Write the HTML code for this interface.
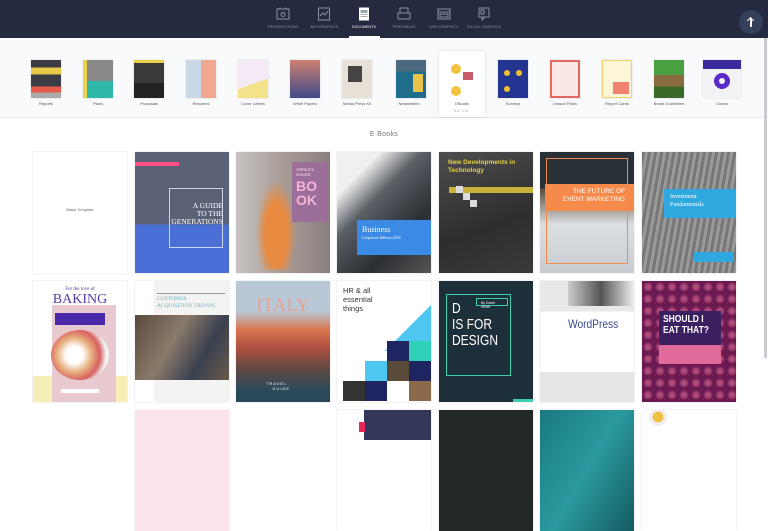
<!DOCTYPE html>
<html><head><meta charset="utf-8">
<style>
*{margin:0;padding:0;box-sizing:border-box}
body{width:768px;height:432px;overflow:hidden;background:#fff;font-family:"Liberation Sans",sans-serif;position:relative}
.nav{position:absolute;left:0;top:0;width:768px;height:38px;background:#262a41}
.ni{position:absolute;top:7px;width:60px;text-align:center;color:#8a8ea6;font-size:3.6px;letter-spacing:.1px}
.ni svg{display:block;margin:0 auto 4px}
.ni.act{color:#fff}
.ul{position:absolute;left:349px;top:36px;width:31px;height:2px;background:#fff}
.up{position:absolute;left:739px;top:10px;width:24px;height:24px;border-radius:50%;background:#34405a}
.up:after{content:"";position:absolute;left:11px;top:8px;width:1.5px;height:9px;background:#fff}
.up:before{content:"";position:absolute;left:9px;top:8px;width:4px;height:4px;border-left:1.5px solid #fff;border-top:1.5px solid #fff;transform:rotate(45deg)}
.strip{position:absolute;left:0;top:38px;width:768px;height:80px;background:#f9fafc;border-bottom:1px solid #e6e8ee}
.t{position:absolute;top:22px;width:30px;height:38px;box-shadow:0 0 2px rgba(0,0,0,.15)}
.tl{position:absolute;top:63px;width:60px;text-align:center;font-size:4px;color:#555}
.sel{position:absolute;left:439px;top:13px;width:46px;height:66px;background:#fff;box-shadow:0 0 3px rgba(0,0,0,.12)}
.h{position:absolute;top:131px;left:0;width:768px;text-align:center;font-size:7px;color:#777;letter-spacing:.3px}
.c{position:absolute;width:94px;height:121px;overflow:hidden;box-shadow:0 0 1.5px rgba(0,0,0,.18)}
.sb{position:absolute;left:764px;top:38px;width:3px;height:320px;background:#c9cbd0}
.tx{position:absolute;font-family:"Liberation Serif",serif}
</style></head><body>
<div class="nav">
 <div class="ni" style="left:253px"><svg width="14" height="14" viewBox="0 0 14 14" fill="none" stroke="#8a8ea6" stroke-width="1"><rect x="1" y="2" width="12" height="10"/><circle cx="7" cy="7.5" r="2"/><line x1="4" y1="2" x2="4" y2="0.5"/><line x1="10" y1="2" x2="10" y2="0.5"/></svg>PRESENTATIONS</div>
 <div class="ni" style="left:294px"><svg width="14" height="14" viewBox="0 0 14 14" fill="none" stroke="#8a8ea6" stroke-width="1"><rect x="1.5" y="1" width="11" height="12"/><path d="M3 9l3-3 2 2 3-4"/></svg>INFOGRAPHICS</div>
 <div class="ni act" style="left:334px"><svg width="14" height="14" viewBox="0 0 14 14"><rect x="2" y="0.5" width="10" height="13" fill="#fff"/><rect x="3.5" y="3" width="7" height="3" fill="#9aa"/><rect x="3.5" y="7" width="7" height="1" fill="#aaa"/><rect x="3.5" y="9" width="7" height="1" fill="#aaa"/></svg>DOCUMENTS</div>
 <div class="ni" style="left:374px"><svg width="14" height="14" viewBox="0 0 14 14" fill="none" stroke="#8a8ea6" stroke-width="1"><path d="M3 1h8v5H3z"/><rect x="1" y="6" width="12" height="6"/></svg>PRINTABLES</div>
 <div class="ni" style="left:414px"><svg width="14" height="14" viewBox="0 0 14 14" fill="none" stroke="#8a8ea6" stroke-width="1"><rect x="1" y="2" width="12" height="10"/><line x1="1" y1="5" x2="13" y2="5"/><rect x="3" y="7" width="8" height="3"/></svg>WEB GRAPHICS</div>
 <div class="ni" style="left:454px"><svg width="14" height="14" viewBox="0 0 14 14" fill="none" stroke="#8a8ea6" stroke-width="1"><rect x="2" y="1" width="10" height="9"/><path d="M5 10l0 3 3-3"/><rect x="4" y="3" width="3" height="4"/></svg>SOCIAL GRAPHICS</div>
 <div class="ul"></div>
 <div class="up"></div>
</div>
<div class="strip">
 <div class="sel"></div>
 <div class="t" style="left:31px;background:linear-gradient(#3a3d44 0 20%,#e8c94a 20% 38%,#3a3d44 38% 70%,#e85a4a 70% 85%,#aaa 85%)"></div>
 <div class="t" style="left:83px;background:linear-gradient(#888 0 55%,#2fb8a8 55%);border-left:4px solid #ead54a"></div>
 <div class="t" style="left:134px;background:linear-gradient(#e8d048 0 8%,#3a3a3a 8% 60%,#222 60%)"></div>
 <div class="t" style="left:186px;background:linear-gradient(90deg,#c8d8e6 50%,#f0a890 50%)"></div>
 <div class="t" style="left:238px;background:linear-gradient(160deg,#f3eaf6 60%,#f2e28a 60%)"></div>
 <div class="t" style="left:290px;background:linear-gradient(#cc8070,#404a88)"></div>
 <div class="t" style="left:342px;background:#e6e0d6"><div style="position:absolute;left:6px;top:6px;width:14px;height:16px;background:#444"></div></div>
 <div class="t" style="left:396px;background:linear-gradient(#4d6a80 0 30%,#1e6d8a 30%);"><div style="position:absolute;right:3px;top:14px;width:10px;height:18px;background:#eac34a"></div></div>
 <div class="t" style="left:447px;background:#fff;box-shadow:none"><div style="position:absolute;left:4px;top:4px;width:10px;height:10px;border-radius:50%;background:#f0c440"></div><div style="position:absolute;left:4px;top:26px;width:10px;height:10px;border-radius:50%;background:#f0c440"></div><div style="position:absolute;right:4px;top:12px;width:10px;height:8px;background:#c85a6a"></div></div>
 <div class="t" style="left:498px;background:#233590"><div style="position:absolute;left:6px;top:10px;width:6px;height:6px;border-radius:50%;background:#f0c030"></div><div style="position:absolute;left:18px;top:10px;width:6px;height:6px;border-radius:50%;background:#f0c030"></div><div style="position:absolute;left:6px;top:26px;width:6px;height:6px;border-radius:50%;background:#f0c030"></div></div>
 <div class="t" style="left:550px;background:#fbe8e4;border:2px solid #e06a60"></div>
 <div class="t" style="left:602px;background:#fdf5d8;border:1px solid #f0d070"><div style="position:absolute;right:2px;bottom:3px;width:16px;height:12px;background:#f08070"></div></div>
 <div class="t" style="left:654px;background:linear-gradient(#4aa040 0 40%,#8a6a40 40% 70%,#3a6a2a 70%)"></div>
 <div class="t" style="left:703px;width:38px;height:38px;background:#f3f3f6"><div style="position:absolute;left:0;top:0;width:38px;height:9px;background:#3a2aa0"></div><div style="position:absolute;left:11px;top:13px;width:16px;height:16px;border-radius:50%;border:5px solid #5a2ac8"></div></div>
 <div class="tl" style="left:16px">Reports</div><div class="tl" style="left:68px">Plans</div><div class="tl" style="left:119px">Proposals</div><div class="tl" style="left:171px">Resumes</div><div class="tl" style="left:223px">Cover Letters</div><div class="tl" style="left:275px">White Papers</div><div class="tl" style="left:327px">Media Press Kit</div><div class="tl" style="left:379px">Newsletters</div><div class="tl" style="left:432px">EBooks</div><div class="tl" style="left:483px">Surveys</div><div class="tl" style="left:535px">Lesson Plans</div><div class="tl" style="left:587px">Report Cards</div><div class="tl" style="left:639px">Brand Guidelines</div><div class="tl" style="left:692px">Charts</div>
 <div class="tl" style="left:432px;top:71px;color:#aaa;font-size:3.5px">8.5" X 11"</div>
</div>
<div class="sb"></div>
<div class="h">E Books</div>

<div class="c" style="left:33px;top:152px;background:#fff"><div style="position:absolute;top:55px;width:94px;text-align:center;font-size:4px;color:#666">Blank Template</div></div>
<div class="c" style="left:135px;top:152px;background:linear-gradient(#5b6278 0 60%,#4a6fd6 60%)"><div style="position:absolute;left:0;top:10px;width:44px;height:4px;background:#ff4f8a"></div><div style="position:absolute;left:34px;top:36px;width:54px;height:60px;border:0.5px solid #cfd6ea"></div><div class="tx" style="right:6px;top:50px;color:#fff;font-size:7.5px;text-align:right;line-height:8px">A GUIDE<br>TO THE<br>GENERATIONS</div></div>
<div class="c" style="left:236px;top:152px;background:linear-gradient(90deg,#c8c3c0,#a89c96 50%,#8a7f80)"><div style="position:absolute;left:20px;top:28px;width:40px;height:90px;background:radial-gradient(ellipse at 50% 60%,#e88a40 40%,transparent 70%)"></div><div style="position:absolute;left:56px;top:10px;width:36px;height:60px;background:#9c6f9a"></div><div style="position:absolute;left:60px;top:15px;color:#f4dce8;font-size:4.5px">ANNUAL<br>SALES</div><div style="position:absolute;left:60px;top:27px;color:#f6b4d8;font-size:14px;font-weight:bold;line-height:14px">BO<br>OK</div></div>
<div class="c" style="left:337px;top:152px;background:linear-gradient(135deg,#f0f0f0 0 20%,#5a5f66 40%,#2b2e33 70%,#555 100%)"><div style="position:absolute;left:20px;top:68px;width:74px;height:35px;background:#3a8ae6"></div><div class="tx" style="left:25px;top:73px;color:#fff;font-size:8px">Business</div><div class="tx" style="left:25px;top:83px;color:#fff;font-size:4px;font-style:italic">Corporate Edition 2018</div></div>
<div class="c" style="left:439px;top:152px;background:linear-gradient(160deg,#4d4d4d,#2e2e2e 60%,#3a3a3a)"><div style="position:absolute;left:9px;top:7px;color:#e8d040;font-size:6.5px;font-weight:bold;line-height:7.5px">New Developments in<br>Technology</div><div style="position:absolute;left:10px;top:35px;width:84px;height:6px;background:#c8b23a"></div><div style="position:absolute;left:17px;top:34px;width:7px;height:7px;background:#ddd"></div><div style="position:absolute;left:24px;top:41px;width:7px;height:7px;background:#ddd"></div><div style="position:absolute;left:31px;top:48px;width:7px;height:7px;background:#ddd"></div></div>
<div class="c" style="left:540px;top:152px;background:linear-gradient(#2a3038 0 30%,#5a4a3a 30%,#dcdfe2 60%,#c8ccd0)"><div style="position:absolute;left:6px;top:6px;width:82px;height:106px;border:1px solid #f58a4a"></div><div style="position:absolute;left:5px;top:32px;width:89px;height:27px;background:#f58a4a"></div><div style="position:absolute;right:9px;top:36px;color:#fff;font-size:6.5px;text-align:right;line-height:8px">THE FUTURE OF<br>EVENT MARKETING</div></div>
<div class="c" style="left:642px;top:152px;background:repeating-linear-gradient(100deg,#777 0 3px,#9a9a9a 3px 6px)"><div style="position:absolute;left:22px;top:37px;width:72px;height:29px;background:#2fa8e0"></div><div class="tx" style="left:28px;top:41px;color:#fff;font-size:6px;line-height:8px">Investment<br>Fundamentals</div><div style="position:absolute;left:52px;top:100px;width:40px;height:10px;background:#2fa8e0"></div></div>

<div class="c" style="left:33px;top:281px;background:#fff"><div style="position:absolute;left:19px;top:24px;width:64px;height:97px;background:#e8c9cf"></div><div style="position:absolute;left:0;top:95px;width:94px;height:26px;background:#f6efb5"></div><div style="position:absolute;left:19px;top:95px;width:64px;height:26px;background:#e8c9cf"></div><div class="tx" style="left:0;width:94px;text-align:center;top:6px;color:#4a3a8a;font-size:5px">For the love of</div><div class="tx" style="left:0;width:94px;text-align:center;top:11px;color:#5a3aa8;font-size:14px">BAKING</div><div style="position:absolute;left:22px;top:32px;width:50px;height:12px;background:#4a2aa8"></div><div style="position:absolute;left:18px;top:49px;width:58px;height:50px;border-radius:50%;background:radial-gradient(circle at 40% 50%,#fff 0 20%,#e8b080 40%,#d86060 60%,#f3f3f3 75%)"></div><div style="position:absolute;left:28px;top:108px;width:38px;height:4px;background:#fff"></div></div>
<div class="c" style="left:135px;top:281px;background:#f3f3f2"><div style="position:absolute;left:0;top:0;width:19px;height:121px;background:#fff"></div><div style="position:absolute;left:22px;top:12px;width:68px;height:0.5px;background:#999"></div><div class="tx" style="left:22px;top:15px;color:#67b3c8;font-size:5.5px;line-height:7px">CUSTOMER<br>ACQUISITION TRENDS</div><div style="position:absolute;left:0;top:34px;width:94px;height:65px;background:linear-gradient(120deg,#5a4a3c,#8a7a6a 40%,#3a4050 70%,#6a5a4a)"></div></div>
<div class="c" style="left:236px;top:281px;background:linear-gradient(#b8c8d6 0 25%,#d87850 40%,#b05040 55%,#6a4a40 70%,#2a4a5a 90%)"><div class="tx" style="left:0;width:94px;text-align:center;top:14px;color:#e8a090;font-size:19px">ITALY</div><div style="position:absolute;left:30px;top:100px;color:#fff;font-size:4px;letter-spacing:1px">TRAVEL<br>&nbsp;&nbsp;&nbsp;GUIDE</div></div>
<div class="c" style="left:337px;top:281px;background:#fff"><div style="position:absolute;left:6px;top:5px;color:#333;font-size:7.5px;line-height:9px">HR &amp; all<br>essential<br>things</div><div style="position:absolute;left:48px;top:24px;width:0;height:0;border-left:46px solid transparent;border-bottom:46px solid #4ec8f0"></div><div style="position:absolute;left:50px;top:60px;width:22px;height:20px;background:#1e2560"></div><div style="position:absolute;left:72px;top:60px;width:22px;height:20px;background:#2fd0b8"></div><div style="position:absolute;left:28px;top:80px;width:22px;height:20px;background:#4ec8f0"></div><div style="position:absolute;left:50px;top:80px;width:22px;height:20px;background:#5a4a3a"></div><div style="position:absolute;left:72px;top:80px;width:22px;height:20px;background:#1e2560"></div><div style="position:absolute;left:6px;top:100px;width:22px;height:20px;background:#333"></div><div style="position:absolute;left:28px;top:100px;width:22px;height:20px;background:#1e2560"></div><div style="position:absolute;left:72px;top:100px;width:22px;height:20px;background:#8a6a4a"></div></div>
<div class="c" style="left:439px;top:281px;background:#1d2f38"><div style="position:absolute;left:7px;top:13px;width:65px;height:82px;border:0.8px solid #3ad0b0"></div><div style="position:absolute;left:37px;top:17px;width:32px;height:8px;border:0.6px solid #3ad0b0;color:#fff;font-size:3.5px;padding:1.5px 4px">By David Smith</div><div style="position:absolute;left:13px;top:20px;color:#fff;font-size:15px;line-height:16px;transform:scaleX(.8);transform-origin:left">D<br>IS FOR<br>DESIGN</div><div style="position:absolute;right:0;bottom:0;width:20px;height:3px;background:#3ad0b0"></div></div>
<div class="c" style="left:540px;top:281px;background:linear-gradient(#e8e8e8 0 25%,#fff 25% 75%,#e6e6e6 75%)"><div style="position:absolute;left:28px;top:0;width:66px;height:25px;background:linear-gradient(90deg,#ccc,#555 50%,#eee)"></div><div style="position:absolute;left:28px;top:36px;color:#3a4a8a;font-size:12px;transform:scaleX(.85);transform-origin:left">WordPress</div></div>
<div class="c" style="left:642px;top:281px;background:radial-gradient(circle,#b04a7a 0 25%,#6a1a50 60%) 0 0/12px 12px,#6a1a50"><div style="position:absolute;left:17px;top:30px;width:62px;height:34px;background:#3a2060"></div><div style="position:absolute;left:21px;top:33px;color:#fff;font-size:10px;line-height:11px;transform:scaleX(.85);transform-origin:left;font-weight:bold">SHOULD I<br>EAT THAT?</div><div style="position:absolute;left:17px;top:64px;width:62px;height:19px;background:#e06a9a"></div></div>

<div class="c" style="left:135px;top:410px;background:#fbe4ee"></div>
<div class="c" style="left:337px;top:410px;background:#fff"><div style="position:absolute;left:27px;top:0;width:67px;height:30px;background:#33375a"></div><div style="position:absolute;left:22px;top:12px;width:6px;height:10px;background:#e8285a"></div></div>
<div class="c" style="left:439px;top:410px;background:#222826"></div>
<div class="c" style="left:540px;top:410px;background:linear-gradient(120deg,#1a7a80,#2a9aa0,#145a60)"></div>
<div class="c" style="left:642px;top:410px;background:#fff"><div style="position:absolute;left:7px;top:-2px;width:18px;height:18px;border-radius:50%;background:radial-gradient(#f0c040 40%,#eee 45%)"></div></div>
</body></html>
